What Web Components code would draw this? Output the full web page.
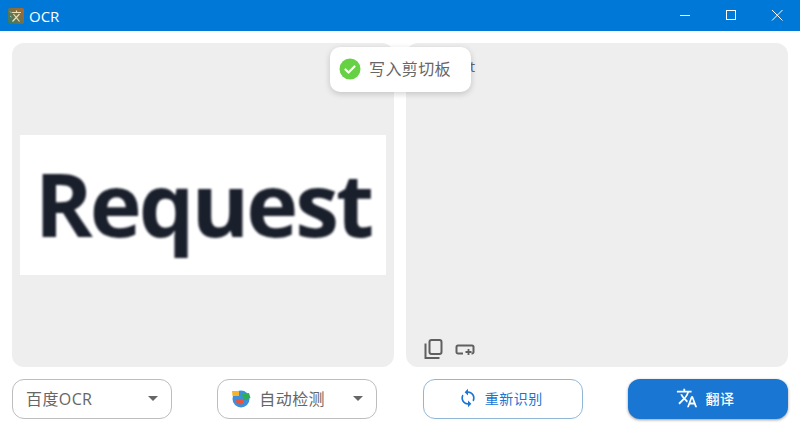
<!DOCTYPE html>
<html>
<head>
<meta charset="utf-8">
<title>OCR</title>
<style>
  html, body { margin: 0; height: 100%; background: #fff; overflow: hidden; }
  body { font-family: "Open Sans", "Noto Sans CJK SC", sans-serif; }
</style>
</head>
<body>
<ocr-app>
  <ocr-titlebar slot="bar">OCR</ocr-titlebar>

  <ocr-panel slot="left" centered>
    <ocr-shot>Request</ocr-shot>
  </ocr-panel>

  <ocr-panel slot="right">
    <span class="result" style="font-size:15px;color:#666;margin-left:-4px">Request</span>
    <svg slot="tools" width="22" height="22" viewBox="0 0 22 22" fill="none" stroke="#5f5f5f" stroke-width="2">
      <path d="M2.500 6.500V20h13" stroke-linecap="square"/>
      <rect x="6.500" y="2" width="12" height="14" rx="2"/>
    </svg>
    <svg slot="tools" width="22" height="22" viewBox="0 0 22 22" fill="none" stroke="#5f5f5f" stroke-width="2">
      <path d="M9 15.500H4a1.500 1.500 0 0 1-1.500-1.500V9A1.500 1.500 0 0 1 4 7.500h14A1.500 1.500 0 0 1 19.500 9v5a1.500 1.500 0 0 1-1.500 1.500h-.5"/>
      <path d="M14.500 11v6M11.500 14h6" stroke-width="1.800"/>
    </svg>
  </ocr-panel>

  <ocr-select slot="controls">百度OCR</ocr-select>
  <ocr-select slot="controls">
    <svg slot="icon" width="20" height="20" viewBox="0 0 20 20">
      <circle cx="10" cy="11" r="8.500" fill="#3d8fdc"/>
      <path d="M1 3h7v5H1.500z" fill="#f6b42c"/>
      <path d="M11 6l7-1 1.500 5-7 2z" fill="#2fae58"/>
      <path d="M5 11.500h7l1 3.500-3 1.500-4.500-1z" fill="#e8553c"/>
    </svg>
    自动检测
  </ocr-select>
  <ocr-button slot="controls">
    <svg slot="icon" width="20" height="20" viewBox="0 0 24 24" fill="#1976d2"><path d="M12 4V1L8 5l4 4V6c3.310 0 6 2.690 6 6 0 1.010-.25 1.970-.7 2.800l1.460 1.460C19.540 15.030 20 13.570 20 12c0-4.420-3.580-8-8-8zm0 14c-3.310 0-6-2.690-6-6 0-1.010.25-1.970.7-2.800L5.240 7.740C4.460 8.970 4 10.430 4 12c0 4.420 3.580 8 8 8v3l4-4-4-4v3z"/></svg>
    重新识别
  </ocr-button>
  <ocr-button slot="controls" primary>
    <svg slot="icon" width="22" height="22" viewBox="0 0 24 24" fill="#fff"><path d="M12.870 15.070l-2.540-2.510.03-.03c1.740-1.940 2.980-4.170 3.710-6.530H17V4h-7V2H8v2H1v1.990h11.170C11.500 7.920 10.440 9.750 9 11.350 8.070 10.320 7.300 9.190 6.690 8h-2c.73 1.630 1.730 3.170 2.980 4.560l-5.090 5.020L4 19l5-5 3.110 3.110.76-2.040zM18.500 10h-2L12 22h2l1.120-3h4.750L21 22h2l-4.500-12zm-2.620 7l1.620-4.330L19.120 17h-3.240z"/></svg>
    翻译
  </ocr-button>

  <ocr-toast slot="overlay">写入剪切板</ocr-toast>
</ocr-app>

<script>
class OcrApp extends HTMLElement {
  constructor() {
    super();
    this.attachShadow({ mode: 'open' });
    this.shadowRoot.innerHTML = `
      <style>
        :host { display: flex; flex-direction: column; position: relative; width: 800px; height: 430px; }
        .panels { display: grid; grid-template-columns: 1fr 1fr; gap: 12px; height: 324px; padding: 12px 12px 0; }
        .controls { display: flex; justify-content: space-between; padding: 12px 12px 0; }
      </style>
      <slot name="bar"></slot>
      <div class="panels"><slot name="left"></slot><slot name="right"></slot></div>
      <div class="controls"><slot name="controls"></slot></div>
      <slot name="overlay"></slot>
    `;
  }
}

class OcrTitlebar extends HTMLElement {
  constructor() {
    super();
    this.attachShadow({ mode: 'open' });
    this.shadowRoot.innerHTML = `
      <style>
        :host { display: flex; align-items: center; height: 31px; background: #0078d7; color: #fff; font-size: 15px; }
        .logo { margin: 0 5px 0 8px; }
        .title { flex: 1; }
        .win { display: flex; }
        .win svg { display: block; width: 46px; height: 31px; }
      </style>
      <svg class="logo" width="16" height="16" viewBox="0 0 16 16">
        <defs><linearGradient id="g" x1="0" y1="1" x2="1" y2="0">
          <stop offset="0" stop-color="#2e7d6a"/><stop offset="1" stop-color="#b5652a"/>
        </linearGradient></defs>
        <rect width="16" height="16" rx="2" fill="url(#g)"/>
        <path d="M4 4.500h9M8.500 2.500v2M5.500 6l6 7.500M11.500 6l-7 7.500" stroke="#e8e2b8" stroke-width="1.200" fill="none"/>
        <path d="M2 3.500l1.500 1.500M2 8l1.500 1" stroke="#7fd6d0" stroke-width="1" fill="none"/>
      </svg>
      <span class="title"><slot></slot></span>
      <div class="win">
        <svg viewBox="0 0 46 31" fill="none" stroke="#fff"><path d="M18 15.500h10"/></svg>
        <svg viewBox="0 0 46 31" fill="none" stroke="#fff"><rect x="18.500" y="10.500" width="9" height="9"/></svg>
        <svg viewBox="0 0 46 31" fill="none" stroke="#fff"><path d="M18 10l10.500 10.500M28.500 10L18 20.500"/></svg>
      </div>
    `;
  }
}

class OcrPanel extends HTMLElement {
  constructor() {
    super();
    this.attachShadow({ mode: 'open' });
    this.shadowRoot.innerHTML = `
      <style>
        :host { display: flex; flex-direction: column; box-sizing: border-box; height: 324px; padding: 12px 16px 7px; background: #eee; border-radius: 12px; }
        :host([centered]) { justify-content: center; padding: 0 8px; }
        .body { flex: 1; line-height: 22px; }
        .tools { display: flex; gap: 9px; margin-left: 1px; }
        :host([centered]) .body { flex: none; }
        :host([centered]) .tools { display: none; }
      </style>
      <div class="body"><slot></slot></div>
      <div class="tools"><slot name="tools"></slot></div>
    `;
  }
}

class OcrShot extends HTMLElement {
  constructor() {
    super();
    this.attachShadow({ mode: 'open' });
    this.shadowRoot.innerHTML = `
      <style>
        :host { display: flex; align-items: center; justify-content: center; height: 140px; background: #fff; overflow: hidden; }
        span { font: 700 88px/1 "Open Sans", sans-serif; letter-spacing: -3px; color: #1a1f2c; filter: blur(1.200px); margin-top: -4px; }
      </style>
      <span><slot></slot></span>
    `;
  }
}

class OcrSelect extends HTMLElement {
  constructor() {
    super();
    this.attachShadow({ mode: 'open' });
    this.shadowRoot.innerHTML = `
      <style>
        :host { display: flex; align-items: center; box-sizing: border-box; width: 160px; height: 40px; padding: 0 13px 2px 13px; border: 1px solid #bdbdbd; border-radius: 12px; color: #666; font-size: 16px; letter-spacing: .4px; }
        .label { flex: 1; display: flex; align-items: center; gap: 8px; white-space: nowrap; }
        ::slotted(svg) { display: block; }
        .arrow { width: 0; height: 0; border: 5px solid transparent; border-top: 5px solid #666; border-bottom: 0; }
      </style>
      <span class="label"><slot name="icon"></slot><span><slot></slot></span></span>
      <i class="arrow"></i>
    `;
  }
}

class OcrButton extends HTMLElement {
  constructor() {
    super();
    this.attachShadow({ mode: 'open' });
    this.shadowRoot.innerHTML = `
      <style>
        :host { display: flex; align-items: center; justify-content: center; gap: 7px; box-sizing: border-box; width: 160px; height: 40px; padding: 0 5px 2px 0; border: 1px solid #8fb8d8; border-radius: 12px; color: #1976d2; font-size: 14px; letter-spacing: .5px; }
        :host([primary]) { border: 0; background: #1976d2; color: #fff; box-shadow: 0 1px 3px rgba(0,0,0,.4); font-weight: 500; }
        ::slotted(svg) { display: block; }
      </style>
      <slot name="icon"></slot><span><slot></slot></span>
    `;
  }
}

class OcrToast extends HTMLElement {
  constructor() {
    super();
    this.attachShadow({ mode: 'open' });
    this.shadowRoot.innerHTML = `
      <style>
        :host { position: absolute; left: 330px; top: 47px; display: flex; align-items: center; gap: 8px; box-sizing: border-box; width: 141px; height: 45px; padding: 0 0 1px 9px; background: #fff; border-radius: 10px; box-shadow: 0 2px 6px rgba(0,0,0,.18); color: #666; font-size: 16px; letter-spacing: .4px; }
        svg { display: block; }
        span { margin-top: -2px; }
      </style>
      <svg width="22" height="22" viewBox="0 0 22 22">
        <circle cx="11" cy="11" r="10.500" fill="#67d144"/>
        <path d="M6.500 11.500l3 3 6-6" fill="none" stroke="#fff" stroke-width="2.200" stroke-linecap="round" stroke-linejoin="round"/>
      </svg>
      <span><slot></slot></span>
    `;
  }
}

customElements.define('ocr-app', OcrApp);
customElements.define('ocr-titlebar', OcrTitlebar);
customElements.define('ocr-panel', OcrPanel);
customElements.define('ocr-shot', OcrShot);
customElements.define('ocr-select', OcrSelect);
customElements.define('ocr-button', OcrButton);
customElements.define('ocr-toast', OcrToast);
</script>
</body>
</html>
